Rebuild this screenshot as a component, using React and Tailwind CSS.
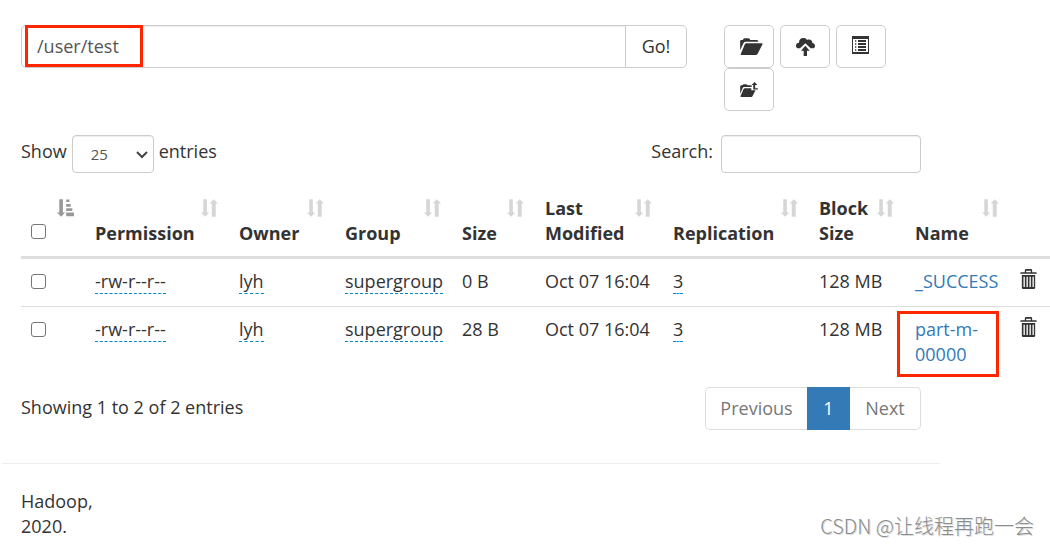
import React from "react";

const FolderOpenIcon = () => (
  <svg viewBox="0 0 68 51" className="h-[17px] w-[23px] shrink-0" fill="currentColor" aria-hidden="true">
    <path d="M0 37V9Q0 6 3 6h5Q9 1 14 1h11Q29 1 30 6h20Q54 6 55 11H17Q12 11 10 15Z" />
    <path d="M18 16H65Q68 16 67 19L52 48Q50 51 47 51H3Q0 51 2 47L14 19Q16 16 18 16Z" />
  </svg>
);

const CloudUploadIcon = () => (
  <svg viewBox="0 0 57 54" className="h-[18px] w-[19px]" fill="currentColor" aria-hidden="true">
    <path d="M7 31C2 31 0 27 0 23C0 17 4 14 9 14C9 5 14 0 22 0C27 0 31 2 33 6C42 2 50 8 49 15C54 16 57 19 57 24C57 28 54 31 50 31H44L28 16L12 31Z" />
    <path d="M28 23L41 38H33V54H23V38H15Z" />
  </svg>
);

const ListIcon = () => (
  <svg viewBox="0 0 51 54" className="mb-[3px] h-[18px] w-[17px]" fill="currentColor" aria-hidden="true">
    <path fillRule="evenodd" d="M0 0H51V54H0ZM3 9V48H48V9Z" />
    <path d="M9 13h4v4h-4ZM9 22h4v4h-4ZM9 31h4v4h-4ZM9 40h4v4h-4ZM18 12h24v6H18ZM18 21h24v6H18ZM18 30h24v6H18ZM18 39h24v6H18Z" />
  </svg>
);

const FolderMoveIcon = () => (
  <svg viewBox="0 0 54 46" className="h-[15px] w-[18px]" fill="currentColor" aria-hidden="true">
    <path d="M0 36V13Q0 10 3 10h4Q8 7 11 7h7Q21 7 22 10h13V15H12Q9 15 8 18Z" />
    <path d="M14 19H34V25H47L38 43Q37 46 34 46H3Q0 46 1 43L10 22Q12 19 14 19Z" />
    <path d="M44 0L53 9H46V19H54V23H40V9H35Z" />
  </svg>
);

const SortIcon = () => (
  <svg viewBox="0 0 52 54" className="h-[18px] w-[17px]" fill="currentColor" aria-hidden="true">
    <path d="M7 0H18V41H25L12.500 54L0 41H7Z" />
    <path d="M39 0L52 13H45V54H33V13H26Z" />
  </svg>
);

const SortedIcon = () => (
  <svg viewBox="0 0 52 54" className="h-[18px] w-[17px]" fill="currentColor" aria-hidden="true">
    <path d="M7 0H18V41H25L12.500 54L0 41H7Z" />
    <path d="M28 1h10v8H28ZM28 15h14v8H28ZM28 28h19v8H28ZM28 41h24v11H28Z" />
  </svg>
);

const TrashIcon = () => (
  <svg viewBox="0 0 50 60" className="h-5 w-[17px]" fill="currentColor" aria-hidden="true">
    <path fillRule="evenodd" d="M14 10V4Q14 0 18 0H32Q36 0 36 4V10H47Q50 10 50 14H0Q0 10 3 10ZM18 10H32V5H18Z" />
    <path fillRule="evenodd" d="M5 18H45V56Q45 60 41 60H9Q5 60 5 56ZM10 23V54H14V23ZM19 23V54H23V23ZM28 23V54H32V23ZM37 23V54H41V23Z" />
  </svg>
);

const actions = [
  { label: "Create directory", Icon: FolderOpenIcon },
  { label: "Upload files", Icon: CloudUploadIcon },
  { label: "Cut and paste", Icon: ListIcon },
  { label: "Parent directory", Icon: FolderMoveIcon },
];

const columns = [
  { name: "Permission", width: "w-[144px]" },
  { name: "Owner", width: "w-[106px]" },
  { name: "Group", width: "w-[117px]" },
  { name: "Size", width: "w-[83px]" },
  { name: "Last Modified", width: "w-[128px]" },
  { name: "Replication", width: "w-[146px]" },
  { name: "Block Size", width: "w-[96px]" },
  { name: "Name", width: "w-[105px]" },
];

const files = [
  { permission: "-rw-r--r--", owner: "lyh", group: "supergroup", size: "0 B", modified: "Oct 07 16:04", replication: "3", block: "128 MB", name: "_SUCCESS" },
  { permission: "-rw-r--r--", owner: "lyh", group: "supergroup", size: "28 B", modified: "Oct 07 16:04", replication: "3", block: "128 MB", name: "part-m-00000", marked: true },
];

const Checkbox = ({ label }) => (
  <input
    type="checkbox"
    aria-label={label}
    className="block size-[15px] appearance-none rounded-[3px] border border-[#767676] bg-white checked:bg-[#337ab7]"
  />
);

const Editable = ({ children }) => (
  <span className="inline-block border-b border-dashed border-[#0088cc] leading-6">{children}</span>
);

function FileRow({ file, last }) {
  const cell = `h-[48px] pl-[10px] pr-2 py-[10px] align-top ${last ? "" : "border-b border-[#dddddd]"}`;
  return (
    <tr>
      <td className={cell}>
        <div className="pt-[5px]">
          <Checkbox label={`Select ${file.name}`} />
        </div>
      </td>
      <td className={cell}><Editable>{file.permission}</Editable></td>
      <td className={cell}><Editable>{file.owner}</Editable></td>
      <td className={cell}><Editable>{file.group}</Editable></td>
      <td className={cell}>{file.size}</td>
      <td className={cell}>{file.modified}</td>
      <td className={cell}><Editable>{file.replication}</Editable></td>
      <td className={cell}>{file.block}</td>
      <td className={`relative ${cell} ${file.marked ? "whitespace-normal" : ""}`}>
        <a href="#file" className="text-[#337ab7]">{file.name}</a>
        {file.marked && (
          <span className="pointer-events-none absolute -left-2 right-[11px] top-1 bottom-0 border-3 border-[#ff2600]" />
        )}
      </td>
      <td className={cell}>
        <button type="button" aria-label={`Delete ${file.name}`} className="block">
          <TrashIcon />
        </button>
      </td>
    </tr>
  );
}

export default function App() {
  return (
    <div className="relative min-h-screen overflow-x-hidden bg-white pt-[25px] font-['Open_Sans','Noto_Sans_CJK_SC',sans-serif] text-[18px] leading-[25px] text-[#333333]">
      <div className="ml-[2px] max-w-[938px] px-[19px]">
        <div className="flex items-start">
          <form className="relative flex h-[43px] w-[74%]" onSubmit={(e) => e.preventDefault()}>
            <input
              type="text"
              aria-label="Directory"
              defaultValue="/user/test"
              className="min-w-0 flex-1 rounded-l-[5px] border border-[#cccccc] px-[15px] text-[#555555] shadow-[inset_0_1px_1px_rgba(0,0,0,0.075)] outline-none"
            />
            <button type="submit" className="-ml-px w-[62px] rounded-r-[5px] border border-[#cccccc] bg-white">
              Go!
            </button>
            <span className="pointer-events-none absolute left-1 top-0 h-[42px] w-[118px] border-3 border-[#ff2600]" />
          </form>
          <div className="ml-[37px] flex flex-1 flex-wrap gap-x-[6px]">
            {actions.map(({ label, Icon }) => (
              <button
                key={label}
                type="button"
                aria-label={label}
                className="flex h-[43px] w-[50px] items-center rounded-[5px] border border-[#cccccc] bg-white pl-[15px]"
              >
                <Icon />
              </button>
            ))}
          </div>
        </div>

        <div className="mt-6 flex items-start justify-between">
          <label className="flex items-start gap-[5px] leading-8">
            Show
            <span className="relative block">
              <select
                defaultValue="25"
                className="block h-[38px] w-[82px] appearance-none rounded-[4px] border border-[#cccccc] bg-white pl-[18px] text-[15px] text-[#555555] shadow-[inset_0_1px_1px_rgba(0,0,0,0.075)]"
              >
                <option>25</option>
                <option>50</option>
                <option>100</option>
              </select>
              <svg viewBox="0 0 12 8" className="pointer-events-none absolute right-[6px] top-4 h-2 w-3" fill="none" stroke="#444444" strokeWidth="2" aria-hidden="true">
                <path d="M1 1L6 6L11 1" />
              </svg>
            </span>
            entries
          </label>
          <label className="flex items-start gap-2 leading-8">
            Search:
            <input
              type="search"
              className="h-[38px] w-[200px] rounded-[4px] border border-[#cccccc] px-3 text-[15px] shadow-[inset_0_1px_1px_rgba(0,0,0,0.075)]"
            />
          </label>
        </div>
      </div>

      <div className="mt-[13px] pl-[21px]">
        <table className="w-full table-fixed border-separate border-spacing-0 whitespace-nowrap text-left">
          <thead>
            <tr>
              <th className="w-[64px] border-b-3 border-[#dddddd] py-[10px] pl-[10px] pr-[11px]">
                <div className="flex h-[50px] items-end justify-between">
                  <div className="pb-[7px]">
                    <Checkbox label="Select all" />
                  </div>
                  <button type="button" aria-label="Sort by type" className="mt-[3px] self-start text-[#999999]">
                    <SortedIcon />
                  </button>
                </div>
              </th>
              {columns.map(({ name, width }) => (
                <th key={name} className={`${width} border-b-3 border-[#dddddd] py-[10px] pl-[10px] pr-[11px] font-bold`}>
                  <div className="flex h-[50px] items-end justify-between">
                    <span className="w-min">
                      {name.split(" ").map((word) => (
                        <span key={word} className="block">{word}</span>
                      ))}
                    </span>
                    <button type="button" aria-label={`Sort by ${name}`} className="mt-[3px] shrink-0 self-start text-[#d6d6d6]">
                      <SortIcon />
                    </button>
                  </div>
                </th>
              ))}
              <th className="border-b-3 border-[#dddddd] p-[10px]" aria-label="Actions" />
            </tr>
          </thead>
          <tbody>
            {files.map((file, i) => (
              <FileRow key={file.name} file={file} last={i === files.length - 1} />
            ))}
          </tbody>
        </table>
      </div>

      <div className="ml-[2px] max-w-[938px]">
        <div className="mt-[10px] flex items-start justify-between px-[19px]">
          <p className="pt-2">Showing 1 to 2 of 2 entries</p>
          <nav aria-label="Pages" className="flex h-[43px] text-[#777777]">
            <a href="#previous" className="flex w-[102px] items-center justify-center rounded-l-[5px] border border-r-0 border-[#dddddd]">Previous</a>
            <a href="#1" aria-current="page" className="flex w-[43px] items-center justify-center bg-[#337ab7] text-white">1</a>
            <a href="#next" className="flex w-[71px] items-center justify-center rounded-r-[5px] border border-l-0 border-[#dddddd]">Next</a>
          </nav>
        </div>
        <hr className="mt-[33px] border-[#eeeeee]" />
        <footer className="mt-[25px] px-[19px]">
          <p className="w-20">Hadoop, 2020.</p>
        </footer>
      </div>

      <div className="absolute bottom-[7px] right-4 font-['Noto_Sans_CJK_SC',sans-serif] text-[20px] font-light text-[#8c8c8c] [text-shadow:1px_1px_0_#dddddd]">
        CSDN @让线程再跑一会
      </div>
    </div>
  );
}
